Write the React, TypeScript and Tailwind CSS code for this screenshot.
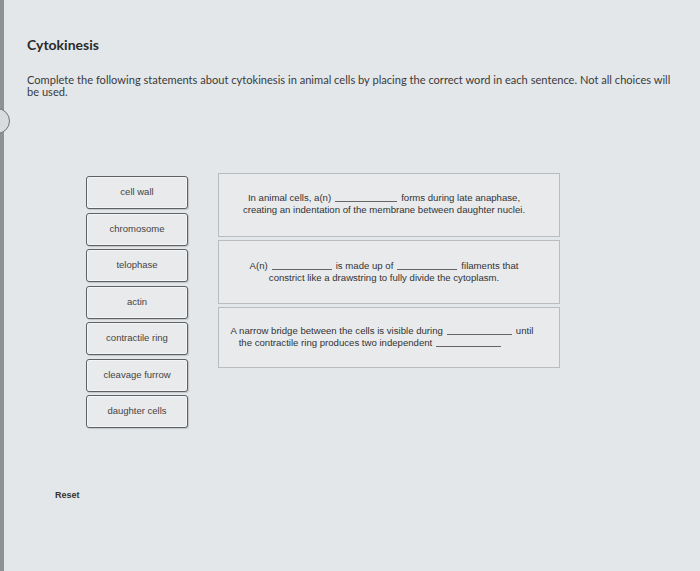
const choices = [
  'cell wall',
  'chromosome',
  'telophase',
  'actin',
  'contractile ring',
  'cleavage furrow',
  'daughter cells',
]

function Blank({ w = 62 }: { w?: number }) {
  return (
    <span
      className="inline-block border-b border-[#666] align-baseline mx-[4px] translate-y-[1px]"
      style={{ width: w, height: 8 }}
    />
  )
}

function ChoiceTile({ label }: { label: string }) {
  return (
    <div className="w-[102px] h-[33px] flex items-center justify-center rounded-[3px] border-[1.5px] border-[#5e6062] bg-[#e8eaec] shadow-[inset_0_0_0_1px_#f4f5f6,1px_1px_1px_rgba(0,0,0,0.15)] text-[9.5px] text-[#444] font-['Liberation_Sans',Arial,sans-serif]">
      {label}
    </div>
  )
}

export default function App() {
  return (
    <div className="relative flex w-[700px] h-[571px] overflow-hidden bg-[#e4e7ea]">
      <div className="w-[4px] h-full bg-[#8f9294] shrink-0" />
      <div className="absolute left-[-16px] top-[108px] w-[26px] h-[26px] rounded-full border border-[#6f7274] bg-[#d9dcde]" />

      <div className="flex-1 pl-[23px] pt-[36px] font-['Lato','Liberation_Sans',sans-serif]">
        <h1 className="text-[14px] leading-[18px] font-bold text-[#2a2a2a]">Cytokinesis</h1>

        <p className="mt-[20px] text-[11.1px] leading-[12px] text-[#3a3a3a]">
          Complete the following statements about cytokinesis in animal cells by placing the correct word in each sentence. Not all choices will
          <br />
          be used.
        </p>

        <div className="mt-[75px] flex">
          <div className="ml-[59px] mt-[3px] flex flex-col gap-[3.5px]">
            {choices.map((c) => (
              <ChoiceTile key={c} label={c} />
            ))}
          </div>

          <div className="ml-[30px] flex flex-col gap-[3px] text-[9.6px] leading-[12px] text-[#333] font-['Liberation_Sans',Arial,sans-serif]">
            <div className="w-[342px] h-[64px] border border-[#b9bcbf] bg-[#e8eaec] pt-[18px] pr-[10px] text-center">
              <div>
                In animal cells, a(n)
                <Blank w={62} />
                forms during late anaphase,
              </div>
              <div>creating an indentation of the membrane between daughter nuclei.</div>
            </div>

            <div className="w-[342px] h-[64px] border border-[#b9bcbf] bg-[#e8eaec] pt-[19px] pr-[10px] text-center">
              <div>
                A(n)
                <Blank w={60} />
                is made up of
                <Blank w={60} />
                filaments that
              </div>
              <div>constrict like a drawstring to fully divide the cytoplasm.</div>
            </div>

            <div className="w-[342px] h-[61px] border border-[#b9bcbf] bg-[#e8eaec] pt-[17px] pr-[14px] text-center">
              <div>
                A narrow bridge between the cells is visible during
                <Blank w={65} />
                until
              </div>
              <div>
                the contractile ring produces two independent
                <Blank w={65} />
                <span className="inline-block w-[20px]" />
              </div>
            </div>
          </div>
        </div>

        <div className="mt-[61px] ml-[28px] text-[9px] font-bold text-[#333] font-['Liberation_Sans',Arial,sans-serif]">
          Reset
        </div>
      </div>
    </div>
  )
}
